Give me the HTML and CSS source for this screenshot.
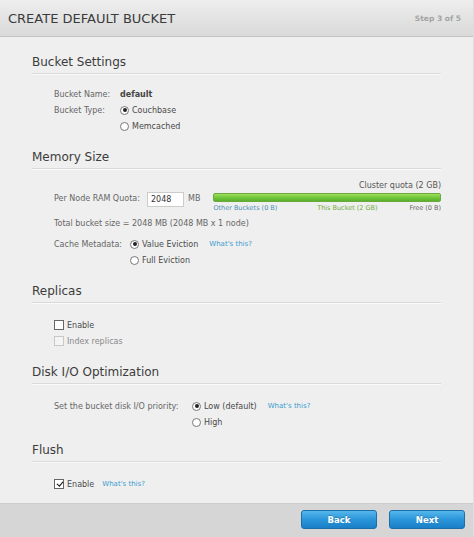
FILE: index.html
```html
<!DOCTYPE html>
<html>
<head>
    <title>Create Default Bucket</title>
    <link rel="stylesheet" href="styles.css">
</head>
<body>
    <div class="dialog">
        <div class="dialog-header">
            <h1 class="title">CREATE DEFAULT BUCKET</h1>
            <span class="step">Step 3 of 5</span>
        </div>

        <div class="dialog-body">
            <div class="section first">
                <h2 class="section-title">Bucket Settings</h2>
                <div class="rows">
                    <div class="row">
                        <span class="label w-name">Bucket Name:</span>
                        <span class="value">default</span>
                    </div>
                    <div class="row">
                        <span class="label w-name">Bucket Type:</span>
                        <label class="opt"><input type="radio" name="type" checked> Couchbase</label>
                    </div>
                    <div class="row">
                        <span class="label w-name"></span>
                        <label class="opt"><input type="radio" name="type"> Memcached</label>
                    </div>
                </div>
            </div>

            <div class="section">
                <h2 class="section-title">Memory Size</h2>
                <div class="quota-title">Cluster quota (2 GB)</div>
                <div class="ram-row">
                    <span class="label w-ram">Per Node RAM Quota:</span>
                    <input class="ram-input" type="text" value="2048">
                    <span class="unit">MB</span>
                    <div class="quota">
                        <div class="quota-bar"></div>
                        <div class="quota-legend">
                            <span class="legend-other">Other Buckets (0 B)</span>
                            <span class="legend-this">This Bucket (2 GB)</span>
                            <span class="legend-free">Free (0 B)</span>
                        </div>
                    </div>
                </div>
                <div class="row total">Total bucket size = 2048 MB (2048 MB x 1 node)</div>
                <div class="rows cache">
                    <div class="row">
                        <span class="label w-cache">Cache Metadata:</span>
                        <label class="opt"><input type="radio" name="meta" checked> Value Eviction</label>
                        <a class="help" href="#">What's this?</a>
                    </div>
                    <div class="row">
                        <span class="label w-cache"></span>
                        <label class="opt"><input type="radio" name="meta"> Full Eviction</label>
                    </div>
                </div>
            </div>

            <div class="section">
                <h2 class="section-title">Replicas</h2>
                <div class="rows">
                    <div class="row">
                        <label class="opt"><input type="checkbox"> Enable</label>
                    </div>
                    <div class="row">
                        <label class="opt disabled"><input type="checkbox" disabled> Index replicas</label>
                    </div>
                </div>
            </div>

            <div class="section">
                <h2 class="section-title">Disk I/O Optimization</h2>
                <div class="rows">
                    <div class="row">
                        <span class="label w-disk">Set the bucket disk I/O priority:</span>
                        <label class="opt"><input type="radio" name="io" checked> Low (default)</label>
                        <a class="help" href="#">What's this?</a>
                    </div>
                    <div class="row">
                        <span class="label w-disk"></span>
                        <label class="opt"><input type="radio" name="io"> High</label>
                    </div>
                </div>
            </div>

            <div class="section flush">
                <h2 class="section-title">Flush</h2>
                <div class="rows">
                    <div class="row">
                        <label class="opt"><input type="checkbox" checked> Enable</label>
                        <a class="help" href="#">What's this?</a>
                    </div>
                </div>
            </div>
        </div>

        <div class="dialog-footer">
            <button class="btn">Back</button>
            <button class="btn">Next</button>
        </div>
    </div>
</body>
</html>
```

FILE: styles.css
```css
body {
    margin: 0;
    background-color: #efefef;
    font-family: "DejaVu Sans", Verdana, sans-serif;
    font-size: 8px;
    color: #555;
}

.dialog {
    width: 474px;
    height: 537px;
    display: flex;
    flex-direction: column;
    border-right: 1px solid #dedede;
    box-sizing: border-box;
}

/* header */
.dialog-header {
    height: 36px;
    flex-shrink: 0;
    display: flex;
    align-items: center;
    justify-content: space-between;
    padding: 0 12px 0 8px;
    background: linear-gradient(#eeeeee, #d9d9d9);
    border-bottom: 1px solid #c2c2c2;
}

.title {
    margin: 0;
    font-size: 13px;
    font-weight: normal;
    color: #3a3a3a;
}

.step {
    font-size: 7.5px;
    font-weight: bold;
    color: #a3a3a3;
}

/* body */
.dialog-body {
    flex: 1;
    padding: 3px 32px 0 32px;
}

.section {
    margin-top: 15px;
}

.section.first {
    margin-top: 14px;
}

.section.flush {
    margin-top: 12px;
}

.section-title {
    margin: 0;
    font-size: 12px;
    line-height: 16px;
    font-weight: normal;
    color: #3c3c3c;
    padding-bottom: 3px;
    border-bottom: 1px solid #dadada;
    box-shadow: 0 1px 0 #fafafa;
}

.rows {
    margin-top: 14px;
    padding-left: 22px;
}

.section.first .rows {
    margin-top: 12px;
}

.row {
    display: flex;
    align-items: center;
    height: 16px;
}

.label {
    color: #666;
    flex-shrink: 0;
}

.w-name { width: 66px; }
.w-ram { width: 93px; }
.w-cache { width: 76px; }
.w-disk { width: 138px; }

.value {
    font-weight: bold;
    color: #444;
}

.opt {
    display: flex;
    align-items: center;
    color: #4a4a4a;
}

.opt.disabled {
    color: #8a8a8a;
}

/* custom radio / checkbox */
input[type="radio"],
input[type="checkbox"] {
    appearance: none;
    -webkit-appearance: none;
    margin: 0 3px 0 0;
    width: 9px;
    height: 9px;
    background: #fff;
    border: 1px solid #777;
    position: relative;
    box-sizing: border-box;
}

input[type="radio"] {
    border-radius: 50%;
}

input[type="radio"]:checked::after {
    content: '';
    position: absolute;
    left: 1.5px;
    top: 1.5px;
    width: 4px;
    height: 4px;
    border-radius: 50%;
    background: #222;
}

input[type="checkbox"] {
    width: 10px;
    height: 10px;
    margin-right: 3px;
    border-color: #666;
}

input[type="checkbox"]:disabled {
    border-color: #c8c8c8;
    background: #f4f4f4;
}

input[type="checkbox"]:checked::after {
    content: '';
    position: absolute;
    left: 2.5px;
    top: 0px;
    width: 2.5px;
    height: 5px;
    border: solid #111;
    border-width: 0 1.5px 1.5px 0;
    transform: rotate(40deg);
}

.help {
    margin-left: 11px;
    font-size: 7px;
    color: #3d9bd0;
    text-decoration: none;
}

.flush .help {
    margin-left: 8px;
}

/* memory */
.quota-title {
    margin-top: 11px;
    height: 11px;
    line-height: 11px;
    text-align: right;
    color: #555;
}

.ram-row {
    display: flex;
    align-items: flex-start;
    padding-left: 22px;
    height: 24px;
}

.ram-row .label {
    line-height: 16px;
}

.ram-input {
    width: 37px;
    height: 15px;
    box-sizing: border-box;
    border: 1px solid #ccc;
    padding: 0 3px;
    font-family: inherit;
    font-size: 8px;
    color: #333;
    background: #fff;
    margin-top: 1px;
}

.unit {
    margin-left: 4px;
    line-height: 16px;
    color: #666;
}

.quota {
    flex: 1;
    margin-left: 13px;
    margin-top: 2px;
}

.quota-bar {
    height: 9px;
    box-sizing: border-box;
    border: 1px solid #6aa93d;
    border-radius: 2px;
    background: linear-gradient(#9ee05c, #6cc238 60%, #5bb02c);
}

.quota-legend {
    display: flex;
    justify-content: space-between;
    font-size: 6.5px;
    line-height: 12px;
}

.legend-other { color: #4b8fb3; }
.legend-this { color: #6fad3c; margin-left: 8px; }
.legend-free { color: #666; }

.total {
    padding-left: 22px;
    color: #666;
}

.rows.cache {
    margin-top: 5px;
}

/* footer */
.dialog-footer {
    height: 34px;
    flex-shrink: 0;
    box-sizing: border-box;
    display: flex;
    justify-content: flex-end;
    gap: 12px;
    padding: 6px 8px 0 0;
    background-color: #d6d6d6;
    border-top: 1px solid #cdcdcd;
}

.btn {
    width: 76px;
    height: 19px;
    border: 1px solid #1b6ea8;
    border-radius: 3px;
    background: linear-gradient(#55b8ec, #2b95da 50%, #1a7fc6);
    color: #fff;
    font-family: inherit;
    font-size: 8.5px;
    font-weight: bold;
    text-shadow: 0 -1px 0 rgba(0,0,0,0.2);
    cursor: pointer;
}
```
